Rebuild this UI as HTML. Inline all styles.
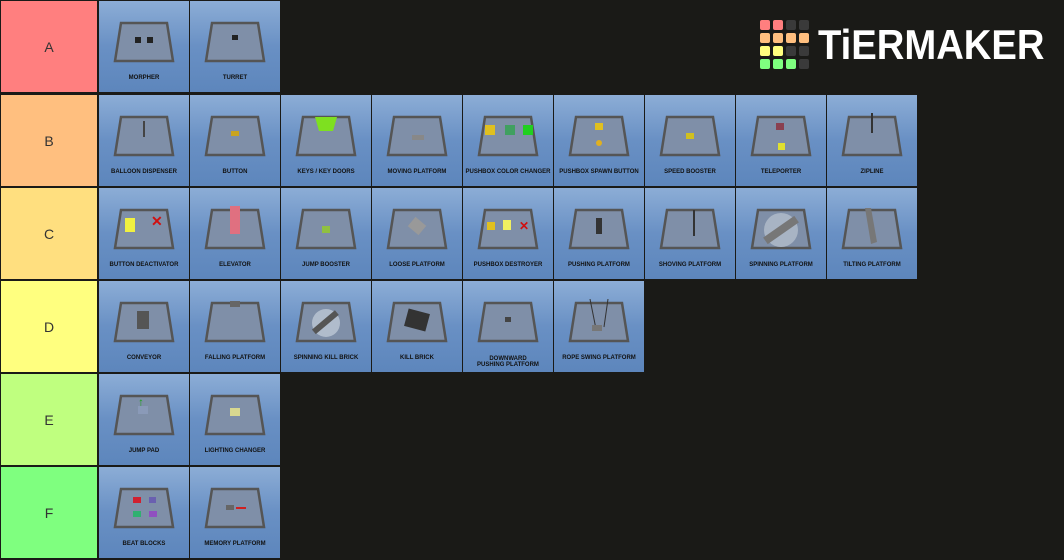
<!DOCTYPE html>
<html><head><meta charset="utf-8"><style>
body{margin:0;width:1064px;height:560px;background:#1a1a17;overflow:hidden;font-family:"Liberation Sans",sans-serif;position:relative}
.row{position:absolute;left:0;width:1064px;height:91px}
.lab{position:absolute;left:1px;top:0;width:96px;height:91px;display:flex;align-items:center;justify-content:center;font-size:14px;color:#333}
.tiles{position:absolute;left:99px;top:0;height:91px;display:flex}
.t{width:90px;height:91px;margin-right:1px;background:linear-gradient(#8cadd6,#6990c4 50%,#5d86bc);position:relative}
.t svg{position:absolute;left:12px;top:18px}
.t span{position:absolute;left:0;right:0;bottom:11px;text-align:center;font-size:6px;font-weight:bold;color:#111;letter-spacing:0}
.logo{position:absolute;left:760px;top:20px}
.sq{position:absolute;width:10px;height:10px;border-radius:2px}
.lt{position:absolute;left:818px;top:22px;font-size:42px;font-weight:bold;color:#fff;letter-spacing:0px;font-family:"Liberation Sans",sans-serif;line-height:46px;transform:scaleX(0.91);transform-origin:left}
</style></head><body>
<svg width="0" height="0" style="position:absolute"><defs><symbol id="p" viewBox="0 0 66 46"><polygon points="10,4 56,4 62,42 4,42" fill="#7f8fa8" stroke="#555" stroke-width="2.5"/></symbol></defs></svg>

<div class="row" style="top:1px"><div class="lab" style="background:#ff7f7f">A</div>
<div class="tiles">
<div class="t"><svg width="66" height="46"><use href="#p"/><rect x="24" y="18" width="6" height="6" fill="#222"/><rect x="36" y="18" width="6" height="6" fill="#222"/></svg><span>MORPHER</span></div>
<div class="t"><svg width="66" height="46"><use href="#p"/><rect x="30" y="16" width="6" height="5" fill="#222"/></svg><span>TURRET</span></div>
</div></div>

<div class="row" style="top:95px"><div class="lab" style="background:#ffbf7f">B</div>
<div class="tiles">
<div class="t"><svg width="66" height="46"><use href="#p"/><rect x="32" y="8" width="2" height="16" fill="#444"/></svg><span>BALLOON DISPENSER</span></div>
<div class="t"><svg width="66" height="46"><use href="#p"/><rect x="29" y="18" width="8" height="5" fill="#c9a420"/></svg><span>BUTTON</span></div>
<div class="t"><svg width="66" height="46"><use href="#p"/><polygon points="22,4 44,4 40,18 26,18" fill="#7ee020"/></svg><span>KEYS / KEY DOORS</span></div>
<div class="t"><svg width="66" height="46"><use href="#p"/><rect x="28" y="22" width="12" height="5" fill="#888"/></svg><span>MOVING PLATFORM</span></div>
<div class="t"><svg width="66" height="46"><use href="#p"/><rect x="10" y="12" width="10" height="10" fill="#e0c020"/><rect x="30" y="12" width="10" height="10" fill="#40a060"/><rect x="48" y="12" width="10" height="10" fill="#20d020"/></svg><span>PUSHBOX COLOR CHANGER</span></div>
<div class="t"><svg width="66" height="46"><use href="#p"/><rect x="29" y="10" width="8" height="7" fill="#e0c020"/><circle cx="33" cy="30" r="3" fill="#e0b020"/></svg><span>PUSHBOX SPAWN BUTTON</span></div>
<div class="t"><svg width="66" height="46"><use href="#p"/><rect x="29" y="20" width="8" height="6" fill="#d0c020"/></svg><span>SPEED BOOSTER</span></div>
<div class="t"><svg width="66" height="46"><use href="#p"/><rect x="28" y="10" width="8" height="7" fill="#8a4050"/><rect x="30" y="30" width="7" height="7" fill="#e0e030"/></svg><span>TELEPORTER</span></div>
<div class="t"><svg width="66" height="46"><use href="#p"/><rect x="32" y="0" width="2" height="20" fill="#333"/></svg><span>ZIPLINE</span></div>
</div></div>

<div class="row" style="top:188px"><div class="lab" style="background:#ffdf7f">C</div>
<div class="tiles">
<div class="t"><svg width="66" height="46"><use href="#p"/><rect x="14" y="12" width="10" height="14" fill="#f0f040"/><text x="40" y="20" fill="#d01010" font-size="14" font-weight="bold">✕</text></svg><span>BUTTON DEACTIVATOR</span></div>
<div class="t"><svg width="66" height="46"><use href="#p"/><rect x="28" y="-10" width="10" height="38" fill="#e07080"/></svg><span>ELEVATOR</span></div>
<div class="t"><svg width="66" height="46"><use href="#p"/><rect x="29" y="20" width="8" height="7" fill="#90c040"/></svg><span>JUMP BOOSTER</span></div>
<div class="t"><svg width="66" height="46"><use href="#p"/><rect x="26" y="14" width="14" height="12" fill="#999" transform="rotate(40 33 20)"/></svg><span>LOOSE PLATFORM</span></div>
<div class="t"><svg width="66" height="46"><use href="#p"/><rect x="12" y="16" width="8" height="8" fill="#e0c020"/><rect x="28" y="14" width="8" height="10" fill="#f0f060"/><text x="44" y="24" fill="#d01010" font-size="12" font-weight="bold">✕</text></svg><span>PUSHBOX DESTROYER</span></div>
<div class="t"><svg width="66" height="46"><use href="#p"/><rect x="30" y="12" width="6" height="16" fill="#333"/></svg><span>PUSHING PLATFORM</span></div>
<div class="t"><svg width="66" height="46"><use href="#p"/><rect x="36" y="4" width="2" height="26" fill="#333"/></svg><span>SHOVING PLATFORM</span></div>
<div class="t"><svg width="66" height="46"><use href="#p"/><circle cx="33" cy="24" r="17" fill="#a8b4c4"/><rect x="14" y="20" width="38" height="8" fill="#777" transform="rotate(-35 33 24)"/></svg><span>SPINNING PLATFORM</span></div>
<div class="t"><svg width="66" height="46"><use href="#p"/><polygon points="26,2 32,2 38,36 32,38" fill="#777"/></svg><span>TILTING PLATFORM</span></div>
</div></div>

<div class="row" style="top:281px"><div class="lab" style="background:#ffff7f">D</div>
<div class="tiles">
<div class="t"><svg width="66" height="46"><use href="#p"/><rect x="26" y="12" width="12" height="18" fill="#555"/></svg><span>CONVEYOR</span></div>
<div class="t"><svg width="66" height="46"><use href="#p"/><rect x="28" y="2" width="10" height="6" fill="#666"/></svg><span>FALLING PLATFORM</span></div>
<div class="t"><svg width="66" height="46"><use href="#p"/><circle cx="33" cy="24" r="14" fill="#b0bccc"/><rect x="18" y="20" width="30" height="6" fill="#555" transform="rotate(-40 33 24)"/></svg><span>SPINNING KILL BRICK</span></div>
<div class="t"><svg width="66" height="46"><use href="#p"/><rect x="22" y="12" width="22" height="18" fill="#333" transform="rotate(15 33 21)"/></svg><span>KILL BRICK</span></div>
<div class="t"><svg width="66" height="46"><use href="#p"/><rect x="30" y="18" width="6" height="5" fill="#444"/></svg><span style="bottom:4px">DOWNWARD<br>PUSHING PLATFORM</span></div>
<div class="t"><svg width="66" height="46"><use href="#p"/><line x1="24" y1="0" x2="30" y2="30" stroke="#333"/><line x1="42" y1="0" x2="38" y2="28" stroke="#333"/><rect x="26" y="26" width="10" height="6" fill="#777"/></svg><span>ROPE SWING PLATFORM</span></div>
</div></div>

<div class="row" style="top:374px"><div class="lab" style="background:#bfff7f">E</div>
<div class="tiles">
<div class="t"><svg width="66" height="46"><use href="#p"/><text x="27" y="14" fill="#20a020" font-size="12" font-weight="bold">↑</text><rect x="27" y="14" width="10" height="8" fill="#8a9ab8"/></svg><span>JUMP PAD</span></div>
<div class="t"><svg width="66" height="46"><use href="#p"/><rect x="28" y="16" width="10" height="8" fill="#d8d890"/></svg><span>LIGHTING CHANGER</span></div>
</div></div>

<div class="row" style="top:467px"><div class="lab" style="background:#7fff7f">F</div>
<div class="tiles">
<div class="t"><svg width="66" height="46"><use href="#p"/><rect x="22" y="12" width="8" height="6" fill="#d02030"/><rect x="38" y="12" width="7" height="6" fill="#6a60b0"/><rect x="22" y="26" width="8" height="6" fill="#30b070"/><rect x="38" y="26" width="8" height="6" fill="#9050c0"/></svg><span>BEAT BLOCKS</span></div>
<div class="t"><svg width="66" height="46"><use href="#p"/><rect x="24" y="20" width="8" height="5" fill="#666"/><rect x="34" y="22" width="10" height="2" fill="#d02020"/></svg><span>MEMORY PLATFORM</span></div>
</div></div>

<div class="logo">
<div class="sq" style="left:0;top:0;background:#ff7f7f"></div><div class="sq" style="left:13px;top:0;background:#ff7f7f"></div><div class="sq" style="left:26px;top:0;background:#3a3a3a"></div><div class="sq" style="left:39px;top:0;background:#3a3a3a"></div>
<div class="sq" style="left:0;top:13px;background:#ffbf7f"></div><div class="sq" style="left:13px;top:13px;background:#ffbf7f"></div><div class="sq" style="left:26px;top:13px;background:#ffbf7f"></div><div class="sq" style="left:39px;top:13px;background:#ffbf7f"></div>
<div class="sq" style="left:0;top:26px;background:#ffff7f"></div><div class="sq" style="left:13px;top:26px;background:#ffff7f"></div><div class="sq" style="left:26px;top:26px;background:#3a3a3a"></div><div class="sq" style="left:39px;top:26px;background:#3a3a3a"></div>
<div class="sq" style="left:0;top:39px;background:#7fff7f"></div><div class="sq" style="left:13px;top:39px;background:#7fff7f"></div><div class="sq" style="left:26px;top:39px;background:#7fff7f"></div><div class="sq" style="left:39px;top:39px;background:#3a3a3a"></div>
</div>
<div class="lt">TiERMAKER</div>
</body></html>
